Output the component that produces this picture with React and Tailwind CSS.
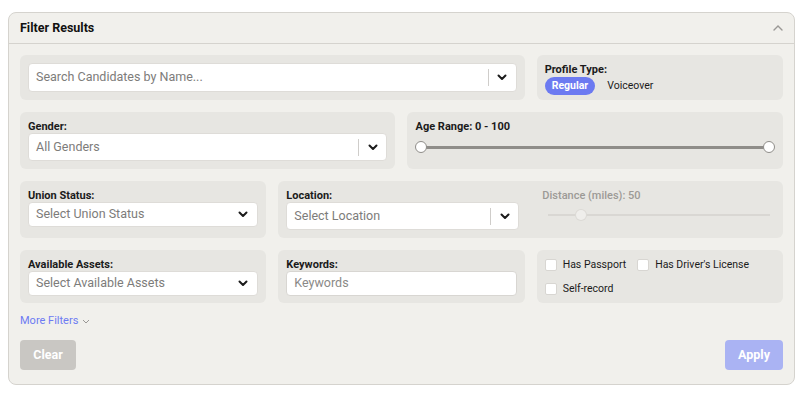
const Chevron = ({ className = '' }) => (
  <svg className={className} width="10" height="7" viewBox="0 0 10 7" fill="none">
    <path d="M1.5 1.5L5 5l3.5-3.5" stroke="currentColor" strokeWidth="2" strokeLinecap="round" strokeLinejoin="round" />
  </svg>
);

const Label = ({ children, muted }) => (
  <div className={`text-[11px] leading-[13px] font-bold ${muted ? 'text-[#9c9a96] font-medium' : 'text-[#1b1b1b]'}`}>
    {children}
  </div>
);

// react-select looking control, with a divider before the arrow
const ComboSelect = ({ placeholder, className = 'h-[28px]' }) => (
  <div className={`flex items-center rounded-[4px] bg-white border border-[#dedcd8] ${className}`}>
    <span className="flex-1 pl-[7px] text-[12.5px] text-[#7d7c7a] truncate">{placeholder}</span>
    <span className="h-[17px] w-px bg-[#cfcdca]" />
    <span className="flex w-[27px] justify-center text-[#1b1b1b]">
      <Chevron />
    </span>
  </div>
);

// plain native-style select
const NativeSelect = ({ placeholder }) => (
  <div className="flex h-[25px] items-center rounded-[4px] bg-white border border-[#dedcd8] pl-[7px] pr-[9px]">
    <span className="flex-1 text-[12.5px] text-[#7d7c7a]">{placeholder}</span>
    <Chevron className="text-[#1b1b1b]" />
  </div>
);

const Card = ({ children, className = '' }) => (
  <div className={`rounded-[6px] bg-[#e7e6e2] px-2 ${className}`}>{children}</div>
);

const Check = ({ children }) => (
  <label className="flex items-center gap-[6px] text-[10.5px] leading-[14px] text-[#1b1b1b]">
    <span className="h-[12px] w-[12px] rounded-[2px] border border-[#d8d6d2] bg-white" />
    {children}
  </label>
);

export default function App() {
  return (
    <div className="pl-2 pr-[9px] pt-3 font-['Roboto','Liberation_Sans',sans-serif]">
      <div className="rounded-[8px] border border-[#d5d3ce] bg-[#f1f0ec]">
        <div className="flex h-[31px] items-center justify-between border-b border-[#d5d3ce] px-[11px]">
          <h2 className="text-[12.5px] font-bold text-[#111]">Filter Results</h2>
          <svg width="10" height="6" viewBox="0 0 10 6" fill="none" className="text-[#9a9895]">
            <path d="M1 5l4-4 4 4" stroke="currentColor" strokeWidth="1.4" strokeLinecap="round" />
          </svg>
        </div>

        <div className="px-[11px] pt-[11px] pb-[14px]">
          <div className="grid grid-cols-6 gap-3">
            <Card className="col-span-4 py-2">
              <ComboSelect placeholder="Search Candidates by Name..." className="h-[29px]" />
            </Card>
            <Card className="col-span-2 pt-2">
              <Label>Profile Type:</Label>
              <div className="mt-[1px] flex items-center gap-[12px] text-[10.5px]">
                <span className="rounded-full bg-[#6c7af1] px-[7px] py-[1px] font-bold text-white">Regular</span>
                <span className="text-[#1b1b1b]">Voiceover</span>
              </div>
            </Card>

            <Card className="col-span-3 py-2">
              <Label>Gender:</Label>
              <ComboSelect placeholder="All Genders" />
            </Card>
            <Card className="col-span-3 py-2">
              <Label>Age Range: 0 - 100</Label>
              <div className="relative flex h-[28px] items-center">
                <div className="mx-[6px] h-[3px] flex-1 bg-[#8f8d89]" />
                <span className="absolute left-0 h-[12px] w-[12px] rounded-full border border-[#8f8d89] bg-white" />
                <span className="absolute right-0 h-[12px] w-[12px] rounded-full border border-[#8f8d89] bg-white" />
              </div>
            </Card>

            <Card className="col-span-2 pt-2">
              <Label>Union Status:</Label>
              <NativeSelect placeholder="Select Union Status" />
            </Card>
            <Card className="col-span-4 flex pt-2 pb-2">
              <div className="w-[233px]">
                <Label>Location:</Label>
                <ComboSelect placeholder="Select Location" />
              </div>
              <div className="ml-[18px] flex-1 pl-[5px]">
                <Label muted>Distance (miles): 50</Label>
                <div className="relative mt-[7px] mr-[5px] ml-[6px] flex h-[12px] items-center">
                  <div className="h-[2px] flex-1 bg-[#d9d7d3]" />
                  <span className="absolute left-[28px] h-[10px] w-[10px] rounded-full bg-[#efeeeb] shadow-[0_0_0_1px_#dcdad6]" />
                </div>
              </div>
            </Card>

            <Card className="col-span-2 pt-2 pb-[7px]">
              <Label>Available Assets:</Label>
              <NativeSelect placeholder="Select Available Assets" />
            </Card>
            <Card className="col-span-2 pt-2 pb-[7px]">
              <Label>Keywords:</Label>
              <div className="flex h-[25px] items-center rounded-[4px] border border-[#d8d6d2] bg-white pl-[7px] text-[12.5px] text-[#8a8987]">
                Keywords
              </div>
            </Card>
            <Card className="col-span-2 flex flex-wrap content-start gap-x-[11px] gap-y-[10px] pt-[8px]">
              <Check>Has Passport</Check>
              <Check>Has Driver's License</Check>
              <Check>Self-record</Check>
            </Card>
          </div>

          <button className="mt-[11px] flex items-center gap-[4px] text-[11px] leading-[14px] text-[#6d7bf3]">
            More Filters
            <svg width="8" height="5" viewBox="0 0 8 5" fill="none" className="text-[#9a9895]">
              <path d="M1 1l3 3 3-3" stroke="currentColor" strokeWidth="1" />
            </svg>
          </button>

          <div className="mt-[12px] flex justify-between">
            <button className="h-[30px] w-[56px] rounded-[4px] bg-[#c9c7c3] text-[12.5px] font-bold text-white">Clear</button>
            <button className="h-[30px] w-[58px] rounded-[4px] bg-[#aab3f3] text-[12.5px] font-bold text-white">Apply</button>
          </div>
        </div>
      </div>
    </div>
  );
}
